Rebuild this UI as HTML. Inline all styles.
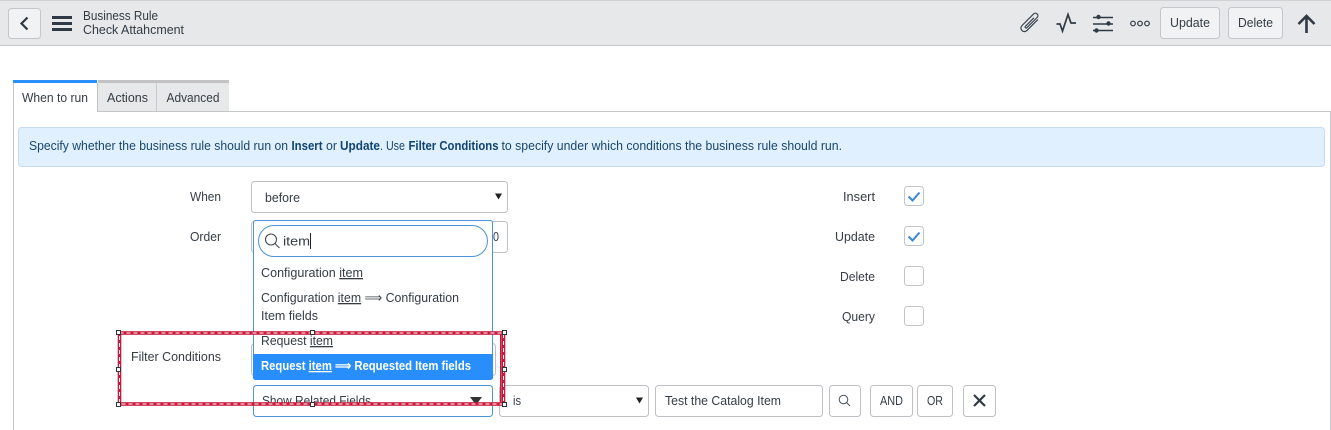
<!DOCTYPE html>
<html><head><meta charset="utf-8"><title>Business Rule</title>
<style>
html,body{margin:0;padding:0;background:#fff;width:1331px;height:430px;overflow:hidden}
svg{display:block}
text{font-family:"Liberation Sans",sans-serif;font-size:13px;fill:#343c44}
.b{font-weight:bold}
.i{fill:#17466e}
.ib{fill:#0f4474;font-weight:bold}
.box{fill:#fff;stroke:#bdc0c4;stroke-width:1}
.btn{fill:#f1f2f4;stroke:#c4c7ca;stroke-width:1}
.h{fill:#fff;stroke:#333;stroke-width:1}
</style></head><body>
<svg width="1331" height="430" viewBox="0 0 1331 430" xmlns="http://www.w3.org/2000/svg">
<defs><clipPath id="c"><rect x="250" y="380" width="240" height="23"/></clipPath></defs>
<!-- header -->
<rect x="0" y="0" width="1331" height="45" fill="#e6e8ea"/>
<rect x="0" y="0" width="1331" height="1" fill="#d0d2d4"/>
<rect x="0" y="45" width="1331" height="1" fill="#c6c8ca"/>
<rect x="8.5" y="8.5" width="32" height="30" rx="3" class="btn"/>
<path d="M27.5 17.5 L21.5 23.5 L27.5 29.5" fill="none" stroke="#2f3a44" stroke-width="2.2"/>
<rect x="52" y="16" width="20" height="3" fill="#2f3a44"/><rect x="52" y="22" width="20" height="3" fill="#2f3a44"/><rect x="52" y="28" width="20" height="3" fill="#2f3a44"/>
<text x="83" y="20" textLength="75" lengthAdjust="spacingAndGlyphs">Business Rule</text>
<text x="83" y="34" textLength="101" lengthAdjust="spacingAndGlyphs">Check Attahcment</text>
<!-- clip -->
<path transform="rotate(45 1029 23.500)" d="M1032.500 14.500 V30 a3.500 3.500 0 0 1 -7 0 V13.500 a2.500 2.500 0 0 1 5 0 V28 a1 1 0 0 1 -2 0 V16" fill="none" stroke="#3a444d" stroke-width="1.200"/>
<path d="M1056.5 24 L1060 24 L1062.500 31 L1068 14.500 L1071 23 L1076 23" fill="none" stroke="#2f3a44" stroke-width="1.700"/>
<g stroke="#2f3a44" stroke-width="1.500"><path d="M1093 17.500 H1113 M1093 24 H1113 M1093 30.500 H1113"/></g>
<circle cx="1098.500" cy="17" r="2.200" fill="#2f3a44"/><circle cx="1108.500" cy="23.500" r="2.200" fill="#2f3a44"/><circle cx="1096.500" cy="30.500" r="2.200" fill="#2f3a44"/>
<g fill="none" stroke="#2f3a44" stroke-width="1.200"><circle cx="1133" cy="23.500" r="2.300"/><circle cx="1140" cy="23.500" r="2.300"/><circle cx="1147" cy="23.500" r="2.300"/></g>
<rect x="1160.500" y="7.500" width="59" height="31" rx="3" class="btn"/>
<text x="1170" y="27" textLength="40" lengthAdjust="spacingAndGlyphs">Update</text>
<rect x="1228.500" y="7.500" width="54" height="31" rx="3" class="btn"/>
<text x="1238" y="27" textLength="35" lengthAdjust="spacingAndGlyphs">Delete</text>
<path d="M1306.500 33 V16 M1298.500 24 L1306.500 16 L1314.500 24" fill="none" stroke="#2f3a44" stroke-width="2.600"/>
<!-- tabs -->
<path d="M13.500 430 V111.500 H1330.500 V430" fill="none" stroke="#c4c6c8"/>
<rect x="98" y="80" width="131" height="31" fill="#e6e8ea"/>
<rect x="98" y="80" width="131" height="3" fill="#c2c2c4"/>
<rect x="97" y="83" width="1" height="28" fill="#bfc1c3"/><rect x="156" y="83" width="1" height="28" fill="#c8cacc"/>
<rect x="13" y="80" width="84" height="32" fill="#fff"/>
<rect x="13" y="80" width="84" height="3" fill="#278efc"/>
<rect x="13" y="83" width="1" height="29" fill="#c4c6c8"/>
<text x="22" y="102" textLength="66" lengthAdjust="spacingAndGlyphs">When to run</text>
<text x="107" y="102" textLength="41" lengthAdjust="spacingAndGlyphs">Actions</text>
<text x="166.500" y="102" textLength="53" lengthAdjust="spacingAndGlyphs">Advanced</text>
<!-- info -->
<rect x="18.500" y="127.500" width="1306" height="39" rx="3" fill="#e1f0fe" stroke="#c6dcf0"/>
<text class="i" x="29" y="150" textLength="259" lengthAdjust="spacingAndGlyphs">Specify whether the business rule should run on</text>
<text class="ib" x="291.500" y="150" textLength="31" lengthAdjust="spacingAndGlyphs">Insert</text>
<text class="i" x="326" y="150" textLength="11" lengthAdjust="spacingAndGlyphs">or</text>
<text class="ib" x="340" y="150" textLength="40" lengthAdjust="spacingAndGlyphs">Update</text>
<text class="i" x="380" y="150" textLength="25" lengthAdjust="spacingAndGlyphs">. Use</text>
<text class="ib" x="408.500" y="150" textLength="90" lengthAdjust="spacingAndGlyphs">Filter Conditions</text>
<text class="i" x="501.500" y="150" textLength="340.500" lengthAdjust="spacingAndGlyphs">to specify under which conditions the business rule should run.</text>
<!-- left form -->
<text x="190" y="201" textLength="31" lengthAdjust="spacingAndGlyphs">When</text>
<rect x="251.500" y="181.500" width="256" height="31" rx="3" class="box"/>
<text x="265" y="202" textLength="35" lengthAdjust="spacingAndGlyphs">before</text>
<path d="M495 193.500 H502 L498.500 199.500 Z" fill="#222"/>
<text x="190" y="241" textLength="31" lengthAdjust="spacingAndGlyphs">Order</text>
<rect x="251.500" y="221.500" width="256" height="31" rx="3" class="box"/>
<text x="493" y="241" textLength="6" lengthAdjust="spacingAndGlyphs">0</text>
<text x="131" y="361" textLength="90" lengthAdjust="spacingAndGlyphs">Filter Conditions</text>
<rect x="251.500" y="343.500" width="244" height="32" rx="3" class="box"/>
<!-- lower row -->
<rect x="253.500" y="385.500" width="239" height="31" rx="3" fill="#fff" stroke="#4c93d8"/>
<g clip-path="url(#c)">
<text x="262" y="405" textLength="109" lengthAdjust="spacingAndGlyphs">Show Related Fields</text>
<path d="M470 397 H482 L476 405 Z" fill="#333"/>
</g>
<rect x="499.500" y="385.500" width="149" height="31" rx="3" class="box"/>
<text x="513" y="405" textLength="8" lengthAdjust="spacingAndGlyphs">is</text>
<path d="M636 397.500 H643 L639.500 403.500 Z" fill="#222"/>
<rect x="655.500" y="385.500" width="167" height="31" rx="3" class="box"/>
<text x="665" y="405" textLength="116" lengthAdjust="spacingAndGlyphs">Test the Catalog Item</text>
<rect x="829.500" y="385.500" width="31" height="31" rx="3" class="box"/>
<g fill="none" stroke="#4a545c" stroke-width="1"><circle cx="843.500" cy="399.500" r="4.300"/><path d="M846.500 402.500 L850 406"/></g>
<rect x="870.500" y="385.500" width="42" height="31" rx="3" class="box"/>
<text x="880" y="405" textLength="23" lengthAdjust="spacingAndGlyphs">AND</text>
<rect x="917.500" y="385.500" width="35" height="31" rx="3" class="box"/>
<text x="927" y="405" textLength="16" lengthAdjust="spacingAndGlyphs">OR</text>
<rect x="963.500" y="385.500" width="32" height="31" rx="3" class="box"/>
<path d="M974 395 L985 406 M985 395 L974 406" stroke="#2f3a44" stroke-width="2.200"/>
<!-- dropdown -->
<rect x="253.500" y="220.500" width="239" height="159" rx="2" fill="#fff" stroke="#4c93d8"/>
<rect x="258.500" y="225.500" width="229" height="31" rx="15.500" fill="#fff" stroke="#4c93d8"/>
<g fill="none" stroke="#3f4850" stroke-width="1.100"><circle cx="271" cy="239.500" r="5.500"/><path d="M275 243.500 L279.500 248"/></g>
<text x="283" y="245.500" textLength="27" lengthAdjust="spacingAndGlyphs">item</text>
<rect x="310" y="233" width="1" height="16" fill="#222"/>
<text x="261" y="277" textLength="102" lengthAdjust="spacingAndGlyphs">Configuration <tspan text-decoration="underline">item</tspan></text>
<text x="261" y="302" textLength="198" lengthAdjust="spacingAndGlyphs">Configuration <tspan text-decoration="underline">item</tspan> ⟹ Configuration</text>
<text x="261" y="320" textLength="57" lengthAdjust="spacingAndGlyphs">Item fields</text>
<text x="261" y="345" textLength="72" lengthAdjust="spacingAndGlyphs">Request <tspan text-decoration="underline">item</tspan></text>
<path d="M253 354 H493 V377 A3 3 0 0 1 490 380 H256 A3 3 0 0 1 253 377 Z" fill="#278efc"/>
<text class="b" style="fill:#fff" x="261" y="370" textLength="210" lengthAdjust="spacingAndGlyphs">Request <tspan text-decoration="underline" style="fill:#fff">item</tspan> ⟹ Requested Item fields</text>
<!-- right form -->
<text x="843" y="201" textLength="32" lengthAdjust="spacingAndGlyphs">Insert</text>
<text x="835" y="241" textLength="40" lengthAdjust="spacingAndGlyphs">Update</text>
<text x="840" y="281" textLength="35" lengthAdjust="spacingAndGlyphs">Delete</text>
<text x="842" y="321" textLength="33" lengthAdjust="spacingAndGlyphs">Query</text>
<g fill="#fff" stroke="#c2c5c8">
<rect x="904.500" y="186.500" width="19" height="19" rx="3"/>
<rect x="904.500" y="226.500" width="19" height="19" rx="3"/>
<rect x="904.500" y="266.500" width="19" height="19" rx="3"/>
<rect x="904.500" y="306.500" width="19" height="19" rx="3"/>
</g>
<path d="M908.500 196.500 L912.500 200.500 L919.500 192.500 M908.500 236.500 L912.500 240.500 L919.500 232.500" fill="none" stroke="#3c86dc" stroke-width="2"/>
<!-- red annotation -->
<rect x="119.500" y="333" width="384" height="71" fill="none" stroke="#c8193c" stroke-width="3.600"/>
<rect x="119.500" y="333" width="384" height="71" fill="none" stroke="#fff" stroke-width="1" stroke-dasharray="4 3"/>
<rect x="500" y="334" width="1.500" height="69" fill="#c8193c"/>
<rect class="h" x="116.500" y="330.500" width="4" height="4"/>
<rect class="h" x="310.500" y="330.500" width="4" height="4"/>
<rect class="h" x="502.500" y="330.500" width="4" height="4"/>
<rect class="h" x="116.500" y="367.500" width="4" height="4"/>
<rect class="h" x="502.500" y="367.500" width="4" height="4"/>
<rect class="h" x="116.500" y="402.500" width="4" height="4"/>
<rect class="h" x="310.500" y="402.500" width="4" height="4"/>
<rect class="h" x="502.500" y="402.500" width="4" height="4"/>
</svg>
</body></html>
